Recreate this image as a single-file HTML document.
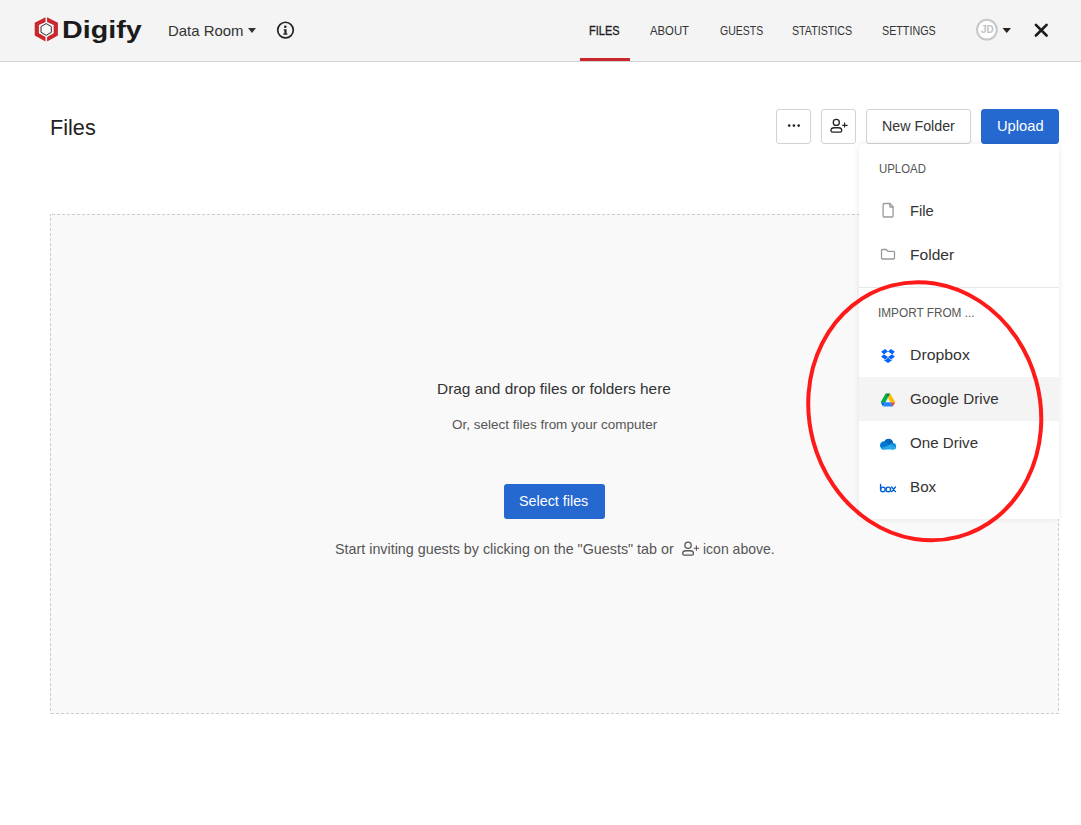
<!DOCTYPE html>
<html><head><meta charset="utf-8">
<style>
*{box-sizing:border-box;margin:0;padding:0}
html,body{width:1081px;height:825px;overflow:hidden;background:#fff;font-family:"Liberation Sans",sans-serif;color:#222}
.abs{position:absolute}
.tx{position:absolute;line-height:1;white-space:nowrap;transform-origin:0 0;font-family:"Liberation Sans",sans-serif}
#hdr{position:absolute;left:0;top:0;width:1081px;height:62px;background:#f4f4f4;border-bottom:1px solid #d3d3d3}
.btn{position:absolute;top:109px;height:35px;border:1px solid #d2d2d2;border-radius:3px;background:#fff}
</style></head><body>
<div id="hdr"></div>
<div class="abs" style="left:580px;top:58px;width:50px;height:3px;background:#c9262d"></div>

<div class="tx" style="left:61.7px;top:17.5px;font-size:24.2px;transform:scaleX(1.185);color:#1b1b1b;font-weight:bold">Digify</div>
<div class="tx" style="left:167.77px;top:23.75px;font-size:14.5px;transform:scaleX(1.029);color:#333">Data Room</div>
<div class="tx" style="left:589.35px;top:24.02px;font-size:13px;transform:scaleX(0.846);color:#1e1e1e;-webkit-text-stroke:0.35px #1e1e1e">FILES</div>
<div class="tx" style="left:650.3px;top:24.02px;font-size:13px;transform:scaleX(0.871);color:#333">ABOUT</div>
<div class="tx" style="left:719.79px;top:24.02px;font-size:13px;transform:scaleX(0.808);color:#333">GUESTS</div>
<div class="tx" style="left:792.18px;top:24.02px;font-size:13px;transform:scaleX(0.821);color:#333">STATISTICS</div>
<div class="tx" style="left:882.08px;top:24.02px;font-size:13px;transform:scaleX(0.825);color:#333">SETTINGS</div>

<div class="tx" style="left:50.03px;top:117.21px;font-size:22px;transform:scaleX(0.984);color:#222">Files</div>

<div class="btn" style="left:776px;width:35px"></div>
<div class="btn" style="left:821px;width:35px"></div>
<div class="btn" style="left:866px;width:105px"></div>
<div class="btn" style="left:981px;width:78px;background:#2468d0;border-color:#2468d0"></div>
<div class="tx" style="left:882.05px;top:118.33px;font-size:15px;transform:scaleX(0.95);color:#333">New Folder</div>
<div class="tx" style="left:996.52px;top:118.33px;font-size:15px;transform:scaleX(0.98);color:#fff">Upload</div>

<!-- drop zone -->
<svg class="abs" style="left:0;top:0" width="1081" height="825">
  <rect x="50" y="214" width="1009" height="500" fill="#f9f9f9"/>
  <g stroke="#cccccc" stroke-width="1" stroke-dasharray="3 2">
    <line x1="50" y1="214.5" x2="1059" y2="214.5" stroke-dashoffset="3"/>
    <line x1="50" y1="713.5" x2="1059" y2="713.5" stroke-dashoffset="4"/>
    <line x1="50.5" y1="214" x2="50.5" y2="714" stroke-dashoffset="1"/>
    <line x1="1058.5" y1="214" x2="1058.5" y2="714" stroke-dashoffset="1"/>
  </g>
</svg>
<div class="tx" style="left:436.74px;top:381.65px;font-size:14.5px;transform:scaleX(1.063);color:#333">Drag and drop files or folders here</div>
<div class="tx" style="left:451.9px;top:419.49px;font-size:12.2px;transform:scaleX(1.106);color:#555">Or, select files from your computer</div>
<div class="abs" style="left:504px;top:484px;width:101px;height:35px;background:#2468d0;border-radius:3px"></div>
<div class="tx" style="left:519.31px;top:493.65px;font-size:14.5px;transform:scaleX(0.988);color:#fff">Select files</div>
<div class="tx" style="left:334.8px;top:541.82px;font-size:14.3px;transform:scaleX(1.001);color:#555">Start inviting guests by clicking on the "Guests" tab or</div>
<div class="tx" style="left:702.62px;top:541.82px;font-size:14.3px;transform:scaleX(0.98);color:#555">icon above.</div>

<!-- dropdown -->
<div class="abs" style="left:859px;top:144px;width:200px;height:375px;background:#fff;border-radius:4px 4px 0 0;box-shadow:0 0 6px rgba(0,0,0,0.09)"></div>
<div class="abs" style="left:859px;top:287px;width:200px;height:1px;background:#e4e8e9"></div>
<div class="abs" style="left:859px;top:377px;width:200px;height:44px;background:#f4f4f4"></div>
<div class="tx" style="left:878.65px;top:162.66px;font-size:12px;transform:scaleX(0.95);color:#555">UPLOAD</div>
<div class="tx" style="left:910.31px;top:203.22px;font-size:15px;transform:scaleX(0.987);color:#333">File</div>
<div class="tx" style="left:910.26px;top:246.82px;font-size:15px;transform:scaleX(1.039);color:#333">Folder</div>
<div class="tx" style="left:878.42px;top:306.86px;font-size:12px;transform:scaleX(0.983);color:#555">IMPORT FROM ...</div>
<div class="tx" style="left:910.15px;top:347.02px;font-size:15px;transform:scaleX(1.055);color:#333">Dropbox</div>
<div class="tx" style="left:910.19px;top:391.32px;font-size:15px;transform:scaleX(1.013);color:#333">Google Drive</div>
<div class="tx" style="left:910.29px;top:435.32px;font-size:15px;transform:scaleX(1.008);color:#333">One Drive</div>
<div class="tx" style="left:910.29px;top:479.32px;font-size:15px;transform:scaleX(1.013);color:#333">Box</div>

<!-- icon overlay -->
<svg class="abs" style="left:0;top:0" width="1081" height="825">
  <!-- logo -->
  <path d="M45.5 17.3 L34.7 22.7 L34.7 35.5 L45.5 41.5 L45.5 37.0 L38.9 33.3 L38.9 24.9 L45.5 22.0 Z" fill="#c9262d"/>
  <path d="M47.1 17.3 L57.9 22.7 L57.9 35.5 L47.1 41.5 L47.1 37.0 L53.7 33.3 L53.7 24.9 L47.1 22.0 Z" fill="#c9262d"/>
  <path d="M46.2 23.6 L51.3 26.6 L51.3 32.3 L46.2 35.3 L41 32.3 L41 26.6 Z" fill="#f7f7f7" stroke="#333" stroke-width="1"/>
  <!-- data room caret -->
  <path d="M248 28 L256 28 L252 33 Z" fill="#333"/>
  <!-- info -->
  <circle cx="285.5" cy="30.05" r="7.8" fill="none" stroke="#222" stroke-width="1.7"/>
  <circle cx="285.3" cy="26.7" r="1.3" fill="#222"/>
  <path d="M283.7 29.2 H286.6 V33.5 H287.4 V34.7 H283.2 V33.5 H284.4 V30.4 H283.7 Z" fill="#222"/>
  <!-- avatar -->
  <circle cx="986.9" cy="29.7" r="9.9" fill="#fff" stroke="#c8c8c8" stroke-width="2"/>
  <path d="M1002.5 28.1 L1011 28.1 L1006.75 33 Z" fill="#222"/>
  <!-- close -->
  <path d="M1035.9 24.8 L1046.6 35.5 M1046.6 24.8 L1035.9 35.5" stroke="#1b1b1b" stroke-width="2.6" stroke-linecap="round"/>
  <!-- dots -->
  <circle cx="789.2" cy="125.6" r="1.3" fill="#222"/>
  <circle cx="793.9" cy="125.6" r="1.3" fill="#222"/>
  <circle cx="798.7" cy="125.6" r="1.3" fill="#222"/>
  <!-- person plus -->
  <g fill="none" stroke="#222" stroke-width="1.3">
    <circle cx="836.3" cy="122.4" r="3.05"/>
    <path d="M832.7 132.05 H840 Q841.75 132.05 841.75 130.5 C841.75 128.7 840.2 127.75 838.3 127.75 H834.4 C832.5 127.75 830.95 128.7 830.95 130.5 Q830.95 132.05 832.7 132.05 Z"/>
    <path d="M842.2 125.3 H847.6 M844.6 122.6 V127.6" stroke-width="1.15"/>
  </g>
  <!-- inline person plus -->
  <g fill="none" stroke="#555" stroke-width="1.3">
    <circle cx="688.05" cy="545.3" r="3.15"/>
    <path d="M684.4 555.05 H691.7 Q693.45 555.05 693.45 553.5 C693.45 551.7 691.9 550.75 690 550.75 H686.1 C684.2 550.75 682.65 551.7 682.65 553.5 Q682.65 555.05 684.4 555.05 Z"/>
    <path d="M693.7 548.3 H699.1 M696.4 545.6 V550.8" stroke-width="1.1"/>
  </g>
  <!-- file -->
  <g fill="none" stroke="#999" stroke-width="1.3" stroke-linejoin="round">
    <path d="M883.1 204.5 Q883.1 203.5 884.1 203.5 H890 L893.1 206.6 V216 Q893.1 217 892.1 217 H884.1 Q883.1 217 883.1 216 Z"/>
    <path d="M889.9 203.5 V207 H893.1"/>
    <path d="M881.5 250.5 Q881.5 249.5 882.5 249.5 H886.2 L887.9 251.3 H893.5 Q894.5 251.3 894.5 252.3 V258 Q894.5 259 893.5 259 H882.5 Q881.5 259 881.5 258 Z"/>
  </g>
  <!-- dropbox -->
  <path transform="translate(881.1 348.9) scale(0.3255 0.3544)" fill="#0061fe" d="M12.5 0l-12.5 8.1 8.7 7 12.5-7.8-8.7-7.3zm-12.5 21.9l12.5 8.2 8.7-7.3-12.5-7.7-8.7 6.8zm21.2 0.9l8.8 7.3 12.4-8.1-8.6-6.9-12.6 7.7zm21.2-14.7l-12.4-8.1-8.8 7.3 12.6 7.8 8.6-7zm-21.1 16.3l-8.8 7.3-3.7-2.5v2.8l12.5 7.5 12.5-7.5v-2.8l-3.7 2.5-8.8-7.3z"/>
  <!-- google drive -->
  <g transform="translate(880.9 393.5) scale(0.1615 0.1667)">
    <path d="m6.6 66.85 3.85 6.65c.8 1.4 1.95 2.5 3.3 3.3l13.75-23.8h-27.5c0 1.55.4 3.1 1.2 4.5z" fill="#0066da"/>
    <path d="m43.65 25-13.75-23.8c-1.35.8-2.5 1.9-3.3 3.3l-25.4 44a9.06 9.06 0 0 0 -1.2 4.5h27.5z" fill="#00ac47"/>
    <path d="m73.55 76.8c1.35-.8 2.5-1.9 3.3-3.3l1.6-2.75 7.65-13.25c.8-1.4 1.2-2.95 1.2-4.5h-27.502l5.852 11.5z" fill="#ea4335"/>
    <path d="m43.65 25 13.75-23.8c-1.35-.8-2.9-1.2-4.5-1.2h-18.5c-1.6 0-3.15.45-4.5 1.2z" fill="#00832d"/>
    <path d="m59.8 53h-32.3l-13.75 23.8c1.35.8 2.9 1.2 4.5 1.2h50.8c1.6 0 3.15-.45 4.5-1.2z" fill="#2684fc"/>
    <path d="m73.4 26.5-12.7-22c-.8-1.4-1.95-2.5-3.3-3.3l-13.75 23.8 16.15 28h27.45c0-1.55-.4-3.1-1.2-4.5z" fill="#ffba00"/>
  </g>
  <!-- onedrive -->
  <ellipse cx="888.6" cy="443.2" rx="4.6" ry="4.4" fill="#0364b8"/>
  <circle cx="884.2" cy="445.4" r="4.2" fill="#0078d4"/>
  <circle cx="892.9" cy="446.2" r="3.2" fill="#1490df"/>
  <path d="M882 449.4 H893.5 Q896 449.4 896 447.4 L890 444.5 Q886 446.5 881 448 Q881 449.4 882 449.4 Z" fill="#28a8ea"/>
  <!-- box -->
  <g fill="none" stroke="#0061d5" stroke-width="1.4" stroke-linecap="round">
    <path d="M880.6 484.4 V489.3"/>
    <circle cx="882.9" cy="489.4" r="2.3"/>
    <circle cx="888.3" cy="489.4" r="2.3"/>
    <path d="M891.7 487 L895.4 491.6 M895.4 487 L891.7 491.6"/>
  </g>
  <!-- red ellipse -->
  <ellipse cx="924.75" cy="411.25" rx="115.5" ry="130" transform="rotate(-14.9 924.75 411.25)" fill="none" stroke="#ff1a1a" stroke-width="4"/>
</svg>
<div class="tx" style="left:980.6px;top:24.6px;font-size:10.2px;font-weight:bold;color:#c2c2c2;transform:scaleX(0.98)">JD</div>
</body></html>
